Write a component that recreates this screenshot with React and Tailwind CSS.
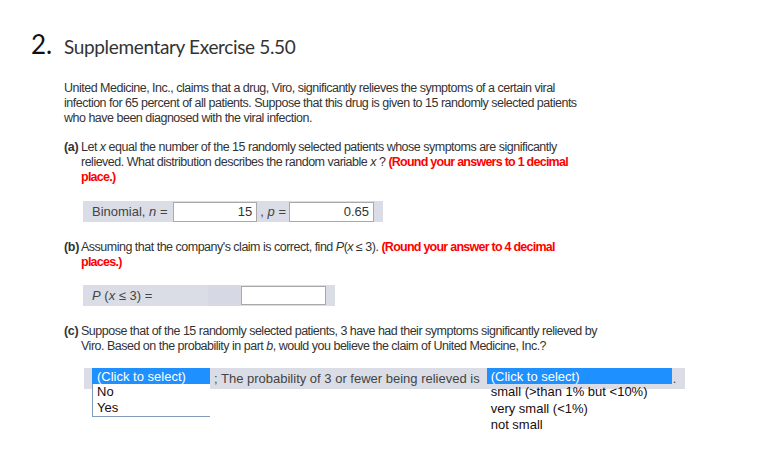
export default function App() {
  const body = { fontFamily: '"Liberation Sans", Arial, sans-serif' };
  const title = { fontFamily: 'Lato, "Open Sans", sans-serif' };
  const red = 'font-bold tracking-[-0.75px] text-[#ff0000]';
  return (
    <div className="min-h-[461px] w-[784px] bg-white text-[#333]" style={body}>
      <div className="pl-[31px] pt-[31px]">
        <div className="flex items-baseline">
          <span className="w-[33px] text-[26px] leading-none text-[#111]" style={title}>2.</span>
          <span className="text-[19px] leading-none tracking-[-0.35px] text-[#333]" style={title}>Supplementary Exercise 5.50</span>
        </div>
        <div className="ml-[33px] mt-[24px] w-[640px] text-[12.5px] leading-[15px] tracking-[-0.5px]">
          <p>
            United Medicine, Inc., claims that a drug, Viro, significantly relieves the symptoms of a certain viral<br />
            infection for 65 percent of all patients. Suppose that this drug is given to 15 randomly selected patients<br />
            who have been diagnosed with the viral infection.
          </p>

          <div className="mt-[14px] flex">
            <span className="w-[17px] shrink-0 font-bold tracking-[-0.3px]">(a)</span>
            <p>
              Let <i>x</i> equal the number of the 15 randomly selected patients whose symptoms are significantly<br />
              relieved. What distribution describes the random variable <i>x</i> ?{' '}
              <span className={red}>(Round your answers to 1 decimal<br />place.)</span>
            </p>
          </div>

          <div className="ml-[19px] mt-[16px] flex h-[21px] w-[300px] items-center bg-[#dadde6] text-[13px] tracking-normal text-[#444]">
            <span className="pl-[9px]">Binomial, <i>n</i> =</span>
            <span className="ml-auto flex h-[20px] w-[84px] items-center justify-end border border-[#a9a9a9] bg-white pr-[4px] text-[#333]">15</span>
            <span className="px-[3px]">, <i>p</i> =</span>
            <span className="flex h-[20px] w-[85px] items-center justify-end border border-[#a9a9a9] bg-white pr-[4px] text-[#333]">0.65</span>
            <span className="w-[9px]" />
          </div>

          <div className="mt-[18px] flex">
            <span className="w-[17px] shrink-0 font-bold tracking-[-0.3px]">(b)</span>
            <p>
              Assuming that the company's claim is correct, find <i>P</i>(<i>x</i> ≤ 3).{' '}
              <span className={red}>(Round your answer to 4 decimal<br />places.)</span>
            </p>
          </div>

          <div className="ml-[19px] mt-[15px] flex h-[21px] w-[252px] items-center bg-[#dadde6] text-[13px] tracking-normal text-[#444]">
            <span className="w-[125px] pl-[9px]"><i>P</i> (<i>x</i> ≤ 3) =</span>
            <span className="h-full w-[33px] bg-[#d6d9e3]" />
            <span className="h-[19px] w-[85px] border border-[#a9a9a9] bg-white" />
          </div>

          <div className="mt-[18px] flex">
            <span className="w-[17px] shrink-0 font-bold tracking-[-0.3px]">(c)</span>
            <p>
              Suppose that of the 15 randomly selected patients, 3 have had their symptoms significantly relieved by<br />
              Viro. Based on the probability in part <i>b</i>, would you believe the claim of United Medicine, Inc.?
            </p>
          </div>

          <div className="ml-[20px] mt-[14px] flex h-[21px] w-[601px] items-center bg-[#dadde6] text-[13px] tracking-normal text-[#444]">
            <div className="relative ml-[8px] h-full w-[118px]">
              <div className="flex h-[16px] items-center bg-[#1e90ff] pl-[5px] text-white">(Click to select)</div>
              <div className="absolute left-0 top-[16px] w-[118px] border-b border-l border-[#7f9db9] bg-white pl-[4px] leading-[16px] text-[#1a0a0a]">
                <div>No</div>
                <div>Yes</div>
              </div>
            </div>
            <span className="pl-[4px] pr-[7px]">; The probability of 3 or fewer being relieved is</span>
            <div className="relative h-full w-[185px]">
              <div className="flex h-[16px] items-center bg-[#1e90ff] pl-[4px] text-white">(Click to select)</div>
              <div className="absolute left-0 top-[16px] w-[185px] pl-[4px] leading-[16.5px] text-[#1a0a0a]">
                <div>small (&gt;than 1% but &lt;10%)</div>
                <div>very small (&lt;1%)</div>
                <div>not small</div>
              </div>
            </div>
            <span className="pl-[1px]">.</span>
          </div>
        </div>
      </div>
    </div>
  );
}
